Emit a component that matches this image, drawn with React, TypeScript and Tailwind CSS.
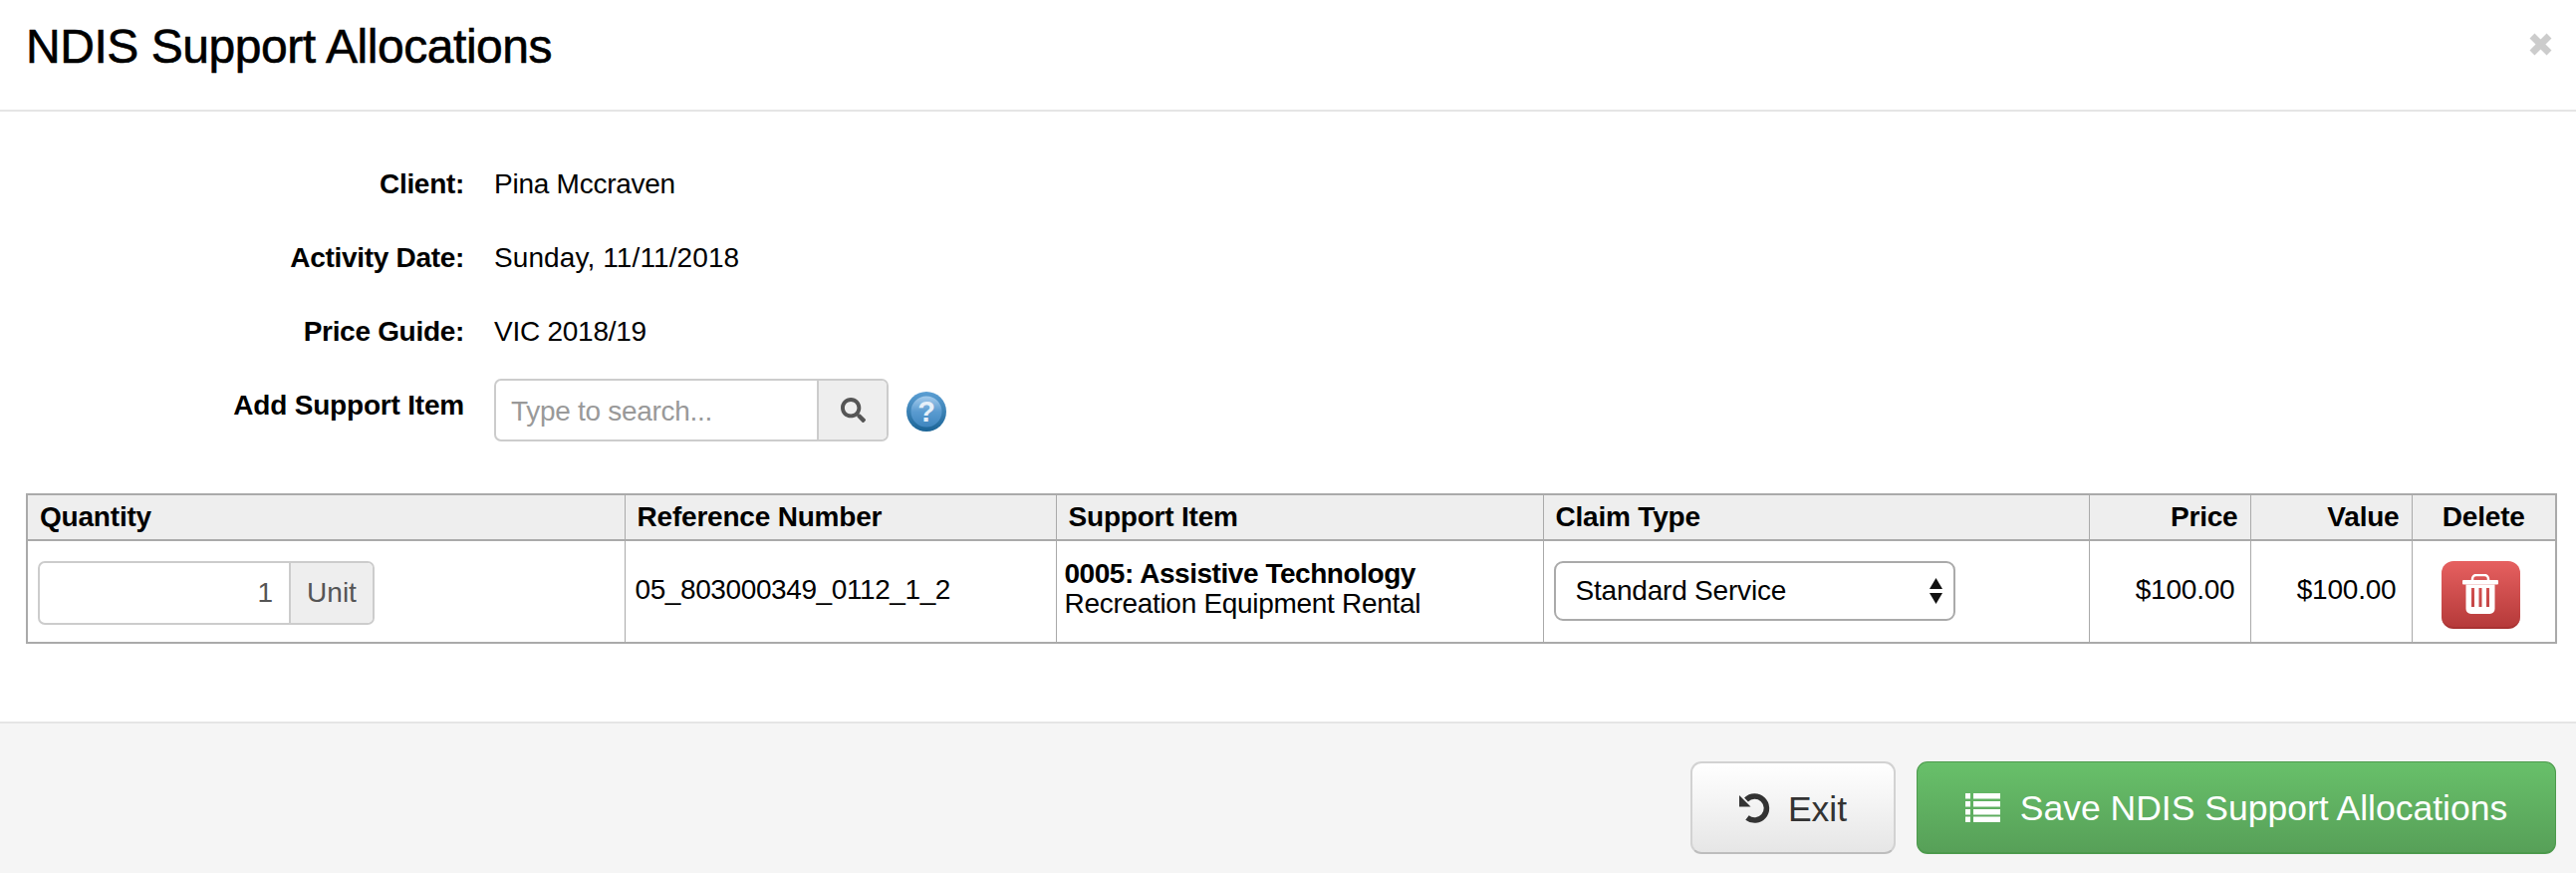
import React from 'react';
import { FaSearch } from 'react-icons/fa';

const detailRows = [
  { label: 'Client:', value: 'Pina Mccraven', spacing: 'tracking-[-0.25px]' },
  { label: 'Activity Date:', value: 'Sunday, 11/11/2018', spacing: 'tracking-[0.1px]' },
  { label: 'Price Guide:', value: 'VIC 2018/19', spacing: 'tracking-[-0.25px]' },
];

function HelpIcon() {
  return (
    <svg width="40" height="40" viewBox="0 0 40 40" className="ml-[18px] mt-[6px] shrink-0">
      <defs>
        <linearGradient id="helpRing" x1="0" y1="0" x2="0" y2="1">
          <stop offset="0" stopColor="#5b9fd4" />
          <stop offset="1" stopColor="#1b6496" />
        </linearGradient>
        <linearGradient id="helpFill" x1="0" y1="0" x2="0" y2="1">
          <stop offset="0" stopColor="#a4cbec" />
          <stop offset="0.5" stopColor="#5a9bd0" />
          <stop offset="1" stopColor="#3f86bf" />
        </linearGradient>
      </defs>
      <circle cx="20" cy="20" r="20" fill="url(#helpRing)" />
      <circle cx="20" cy="20" r="15.5" fill="url(#helpFill)" />
      <text x="20" y="30" textAnchor="middle" fontSize="29" fontWeight="700" fill="#e6f0f9" fontFamily="Liberation Sans, sans-serif">?</text>
    </svg>
  );
}

function CloseIcon() {
  return (
    <svg width="25" height="25" viewBox="0 0 25 25" className="mt-[32px]">
      <path d="M4 4l17 17M21 4L4 21" stroke="#cccccc" strokeWidth="7" />
    </svg>
  );
}

function TrashIcon() {
  return (
    <svg width="36" height="40" viewBox="0 0 36 40" fill="white">
      <path d="M10 7V5a4 4 0 0 1 4-4h8a4 4 0 0 1 4 4v2" fill="none" stroke="white" strokeWidth="2.5" />
      <rect x="0" y="6" width="36" height="4.5" rx="1" />
      <path
        fillRule="evenodd"
        d="M3.5 10.5h29V35a5 5 0 0 1-5 5h-19a5 5 0 0 1-5-5zM9 14v19h3V14zM16.5 14v19h3V14zM24 14v19h3V14z"
      />
    </svg>
  );
}

function UndoIcon() {
  return (
    <svg width="31" height="30" viewBox="0 0 31 30" fill="#333333">
      <path d="M7 6.5A12 12 0 1 1 8 24.5" fill="none" stroke="#333333" strokeWidth="5.5" />
      <path d="M0 2v11.5h11.5z" />
    </svg>
  );
}

function ListIcon() {
  const rows = [0, 8, 16, 23.5];
  return (
    <svg width="35" height="29" viewBox="0 0 35 29" fill="white">
      {rows.map((y) => (
        <g key={y}>
          <rect x="0" y={y} width="5" height="5.5" />
          <rect x="8" y={y} width="27" height="5.5" />
        </g>
      ))}
    </svg>
  );
}

export default function App() {
  return (
    <div className="w-[2586px] h-[876px] flex flex-col bg-white text-black font-['Liberation_Sans',Arial,sans-serif] text-[28px] leading-[40px]">
      <div className="h-[112px] shrink-0 border-b-2 border-[#e5e5e5] flex items-start justify-between pl-[26px] pr-[23px]">
        <h4 className="text-[48px] leading-[48px] mt-[23px] tracking-[-0.45px] [-webkit-text-stroke:0.6px_black]">NDIS Support Allocations</h4>
        <CloseIcon />
      </div>

      <div className="flex-1 pl-[26px]">
        <div className="pt-[53px] pl-[1px]">
          {detailRows.map((row) => (
            <div key={row.label} className="flex h-[74px]">
              <div className="w-[439px] text-right font-bold tracking-[-0.3px]">{row.label}</div>
              <div className={`ml-[30px] ${row.spacing}`}>{row.value}</div>
            </div>
          ))}
          <div className="flex h-[64px]">
            <div className="w-[439px] text-right font-bold tracking-[-0.2px]">Add Support Item</div>
            <div className="ml-[30px] mt-[-7px] w-[396px] h-[63px] flex border-2 border-[#cccccc] rounded-[7px] overflow-hidden">
              <div className="flex-1 pl-[15px] pt-[2px] flex items-center text-[#999999] tracking-[-0.3px]">Type to search...</div>
              <div className="w-[70px] border-l-2 border-[#cccccc] bg-[#eeeeee] flex items-center justify-center">
                <FaSearch className="w-[25px] h-[25px] text-[#555555]" />
              </div>
            </div>
            <HelpIcon />
          </div>
        </div>

        <table className="mt-[44px] w-[2539px] h-[151px] table-fixed border-collapse border-2 border-[#aaaaaa]">
          <colgroup>
            <col className="w-[600px]" />
            <col className="w-[433px]" />
            <col className="w-[489px]" />
            <col className="w-[548px]" />
            <col className="w-[162px]" />
            <col className="w-[162px]" />
            <col className="w-[145px]" />
          </colgroup>
          <thead>
            <tr className="h-[46px] bg-[#eeeeee] font-bold tracking-[-0.2px]">
              <th className="border border-[#aaaaaa] border-b-2 px-[12px] text-left">Quantity</th>
              <th className="border border-[#aaaaaa] border-b-2 px-[12px] text-left">Reference Number</th>
              <th className="border border-[#aaaaaa] border-b-2 px-[12px] text-left">Support Item</th>
              <th className="border border-[#aaaaaa] border-b-2 px-[12px] text-left">Claim Type</th>
              <th className="border border-[#aaaaaa] border-b-2 px-[12px] text-right">Price</th>
              <th className="border border-[#aaaaaa] border-b-2 px-[12px] text-right">Value</th>
              <th className="border border-[#aaaaaa] border-b-2 px-[12px] text-center">Delete</th>
            </tr>
          </thead>
          <tbody>
            <tr>
              <td className="border border-[#aaaaaa] pl-[10px] align-top pt-[20px]">
                <div className="w-[338px] h-[64px] flex border-2 border-[#cccccc] rounded-[7px] overflow-hidden">
                  <div className="flex-1 pr-[16px] flex items-center justify-end text-[#555555]">1</div>
                  <div className="w-[84px] border-l-2 border-[#cccccc] bg-[#eeeeee] text-[#555555] flex items-center justify-center">Unit</div>
                </div>
              </td>
              <td className="border border-[#aaaaaa] pl-[10px] align-top pt-[29px] tracking-[-0.4px]">05_803000349_0112_1_2</td>
              <td className="border border-[#aaaaaa] pl-[8px] align-top pt-[18px] leading-[30px]">
                <div className="font-bold tracking-[-0.45px]">0005: Assistive Technology</div>
                <div className="tracking-[-0.3px]">Recreation Equipment Rental</div>
              </td>
              <td className="border border-[#aaaaaa] pl-[10px] align-top pt-[20px]">
                <div className="w-[403px] h-[60px] border-2 border-[#aaaaaa] rounded-[9px] pl-[20px] pr-[11px] flex items-center justify-between">
                  <span className="tracking-[-0.2px]">Standard Service</span>
                  <svg width="13" height="26" viewBox="0 0 13 26" fill="#111111">
                    <path d="M6.5 0 13 11H0z" />
                    <path d="M0 15h13L6.5 26z" />
                  </svg>
                </div>
              </td>
              <td className="border border-[#aaaaaa] pr-[15px] text-right align-top pt-[29px] tracking-[-0.2px]">$100.00</td>
              <td className="border border-[#aaaaaa] pr-[15px] text-right align-top pt-[29px] tracking-[-0.2px]">$100.00</td>
              <td className="border border-[#aaaaaa] align-top pt-[20px] pl-[29px]">
                <div className="w-[79px] h-[68px] rounded-[12px] border-b-2 border-[#a93232] bg-gradient-to-b from-[#e66060] to-[#b63a3a] flex items-center justify-center">
                  <TrashIcon />
                </div>
              </td>
            </tr>
          </tbody>
        </table>
      </div>

      <div className="h-[152px] shrink-0 border-t-2 border-[#e5e5e5] bg-[#f5f5f5] pt-[38px] pl-[1697px] flex items-start gap-[21px] text-[35.5px]">
        <div className="w-[206px] h-[93px] rounded-[11px] border-2 border-[#d2d2d2] border-b-[#bdbdbd] bg-gradient-to-b from-white to-[#e6e6e6] text-[#333333] flex items-center justify-center gap-[18px]">
          <UndoIcon />
          <span className="pt-[2px]">Exit</span>
        </div>
        <div className="w-[642px] h-[93px] rounded-[11px] border border-[#4c9a4c] border-b-2 bg-gradient-to-b from-[#68c06a] to-[#57a058] text-white flex items-center justify-center gap-[20px]">
          <ListIcon />
          <span className="pt-[2px]">Save NDIS Support Allocations</span>
        </div>
      </div>
    </div>
  );
}
